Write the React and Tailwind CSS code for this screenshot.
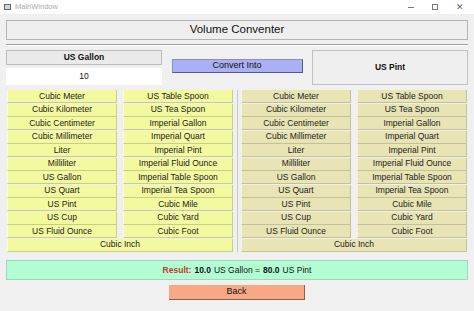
const leftUnits = [
  ["Cubic Meter", "US Table Spoon"],
  ["Cubic Kilometer", "US Tea Spoon"],
  ["Cubic Centimeter", "Imperial Gallon"],
  ["Cubic Millimeter", "Imperial Quart"],
  ["Liter", "Imperial Pint"],
  ["Milliliter", "Imperial Fluid Ounce"],
  ["US Gallon", "Imperial Table Spoon"],
  ["US Quart", "Imperial Tea Spoon"],
  ["US Pint", "Cubic Mile"],
  ["US Cup", "Cubic Yard"],
  ["US Fluid Ounce", "Cubic Foot"],
];

const UnitPanel = ({ tone }) => {
  const btn =
    tone === "from"
      ? "bg-[#f3f99e] border-[#c9cc8a]"
      : "bg-[#e8e4b3] border-[#c4c09a]";
  return (
    <div className="grid grid-cols-2 gap-x-[6px] grid-rows-[repeat(12,13.5px)]">
      {leftUnits.flat().map((u) => (
        <div
          key={u}
          className={`${btn} h-[13px] border-r border-b border-l border-l-white/60 flex items-center justify-center text-[8.5px] text-[#222]`}
        >
          {u}
        </div>
      ))}
      <div
        className={`${btn} col-span-2 h-[13px] border-r border-b border-l border-l-white/60 flex items-center justify-center text-[8.5px] text-[#222]`}
      >
        Cubic Inch
      </div>
    </div>
  );
};

export default function App() {
  return (
    <div
      className="w-[474px] h-[311px] bg-[#f0f0f0] overflow-hidden flex flex-col"
      style={{ fontFamily: '"Liberation Sans", Arial, sans-serif' }}
    >
      {/* Title bar */}
      <div className="h-[14px] bg-white flex items-center px-[4px] text-[7.5px] text-[#aaa]">
        <div className="w-[7px] h-[6px] border border-[#666] bg-[#cfd8e0] mr-[4px]" />
        <span>MainWindow</span>
        <div className="ml-auto flex items-center gap-[18px] pr-[6px] text-[#666]">
          <div className="w-[6px] h-px bg-[#777]" />
          <div className="w-[6px] h-[6px] border border-[#777]" />
          <span className="text-[9px] leading-none">✕</span>
        </div>
      </div>

      <div className="flex-1 flex flex-col px-[6px] pt-[6px]">
        {/* Heading */}
        <div className="h-[20px] bg-[#efefef] border border-[#b4b4b4] flex items-center justify-center text-[11.5px] text-[#111]">
          Volume Conventer
        </div>
        <div className="mt-[4px] h-[2px] border-t border-[#a0a0a0] border-b border-b-white" />

        {/* Input row */}
        <div className="mt-[4px] flex items-stretch h-[35px]">
          <div className="w-[156px] flex flex-col justify-between">
            <div className="h-[15px] bg-[#eaeaea] border border-[#bdbdbd] flex items-center justify-center text-[8.5px] font-bold text-[#111]">
              US Gallon
            </div>
            <div className="h-[17px] bg-white flex items-center justify-center text-[8.5px] text-[#111]">
              10
            </div>
          </div>
          <div className="flex-1 flex items-start justify-center pt-[9px]">
            <div className="w-[131px] h-[14px] bg-[#aab0f3] border border-[#8a8fc0] border-b-[#555a80] border-r-[#555a80] flex items-center justify-center text-[9px] text-[#111]">
              Convert Into
            </div>
          </div>
          <div className="w-[156px] bg-[#efefef] border border-[#c0c0c0] flex items-center justify-center text-[8.5px] font-bold text-[#111]">
            US Pint
          </div>
        </div>

        {/* Unit grids */}
        <div className="mt-[5px] flex">
          <div className="w-[226px] ml-[1px]">
            <UnitPanel tone="from" />
          </div>
          <div className="w-[8px] flex justify-center">
            <div className="w-px h-full bg-[#c8c8c8]" />
          </div>
          <div className="w-[226px]">
            <UnitPanel tone="to" />
          </div>
        </div>

        {/* Result */}
        <div className="mt-[8px] h-[20px] bg-[#b3fdd3] border border-[#9ed6c0] flex items-center justify-center text-[8.5px] text-[#111] gap-[3px]">
          <span className="font-bold text-[#c0392b]">Result:</span>
          <span className="font-bold">10.0</span>
          <span>US Gallon =</span>
          <span className="font-bold">80.0</span>
          <span>US Pint</span>
        </div>

        {/* Back */}
        <div className="mt-[5px] flex justify-center">
          <div className="w-[136px] h-[15px] bg-[#f9a886] border-r border-b border-[#8a6050] flex items-center justify-center text-[9px] text-[#111]">
            Back
          </div>
        </div>
      </div>
    </div>
  );
}
